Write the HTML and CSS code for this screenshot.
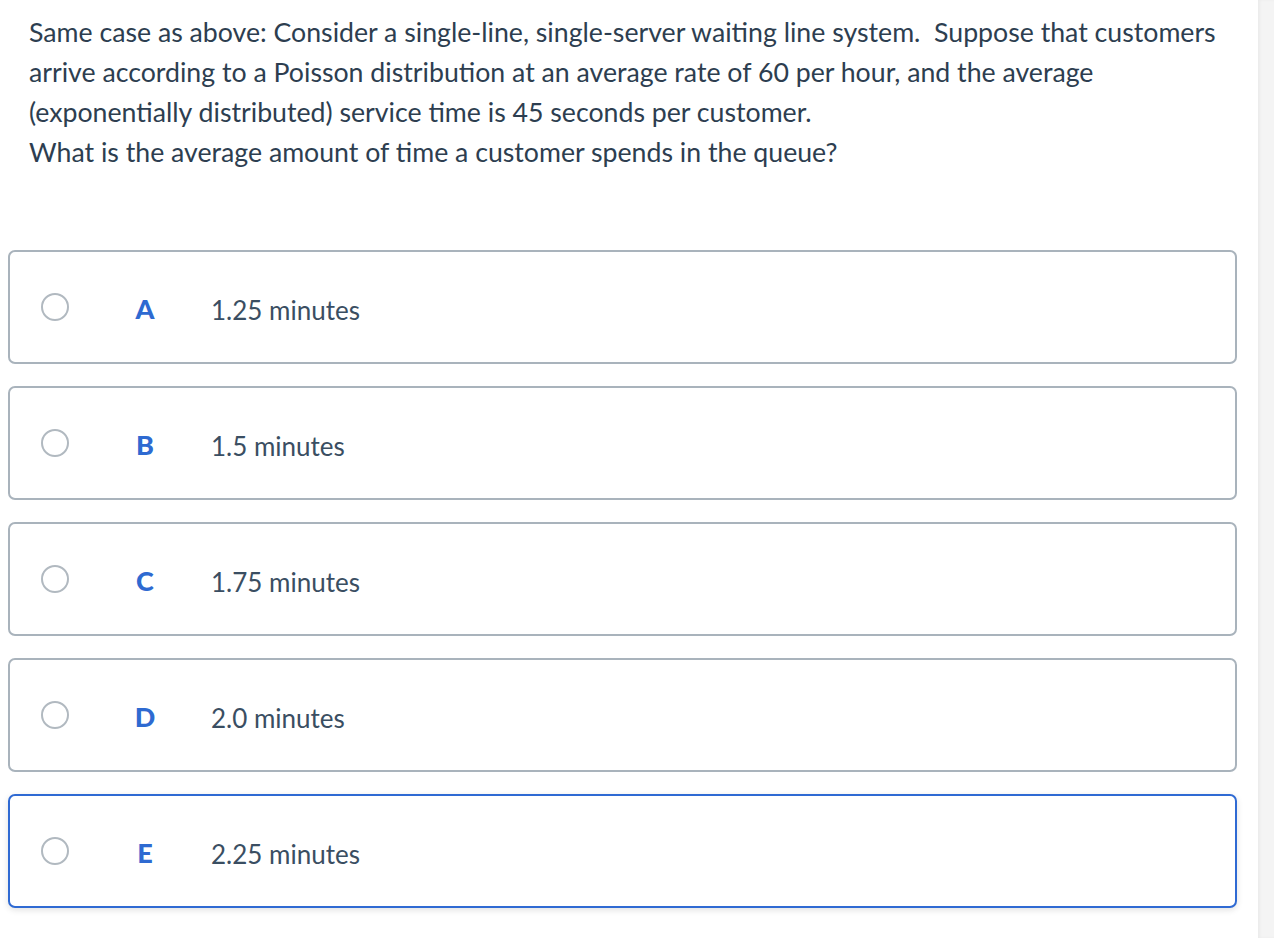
FILE: index.html
```html
<!DOCTYPE html>
<html lang="en">
<head>
<meta charset="utf-8">
<title>Question</title>
<link rel="stylesheet" href="styles.css">
</head>
<body>
<div class="page">
  <main class="content">
    <div class="question">
      <p>Same case as above: Consider a single-line, single-server waiting line system.&nbsp; Suppose that customers arrive according to a Poisson distribution at an average rate of 60 per hour, and the average (exponentially distributed) service time is 45 seconds per customer.</p>
      <p>What is the average amount of time a customer spends in the queue?</p>
    </div>
    <div class="options">
      <label class="option"><span class="radio"></span><span class="letter">A</span><span class="text">1.25 minutes</span></label>
      <label class="option"><span class="radio"></span><span class="letter">B</span><span class="text">1.5 minutes</span></label>
      <label class="option"><span class="radio"></span><span class="letter">C</span><span class="text">1.75 minutes</span></label>
      <label class="option"><span class="radio"></span><span class="letter">D</span><span class="text">2.0 minutes</span></label>
      <label class="option option-focus"><span class="radio"></span><span class="letter">E</span><span class="text">2.25 minutes</span></label>
    </div>
  </main>
  <div class="scrollbar"></div>
</div>
</body>
</html>
```

FILE: styles.css
```css
html, body {
  margin: 0;
  padding: 0;
  background: #ffffff;
}
body {
  font-family: "Lato", "Open Sans", sans-serif;
  color: #2d3e50;
}
.page {
  display: flex;
  width: 1274px;
  height: 938px;
  overflow: hidden;
}
.content {
  flex: 1;
  padding: 12px 21px 0 8px;
}
.question {
  padding-left: 21px;
  font-size: 26.7px;
  line-height: 40px;
}
.question p {
  margin: 0;
}
.options {
  margin-top: 78px;
  display: flex;
  flex-direction: column;
  gap: 22px;
}
.option {
  display: flex;
  align-items: center;
  height: 114px;
  box-sizing: border-box;
  border: 2px solid #a9b3bc;
  border-radius: 7px;
  padding-left: 31px;
  background: #fff;
}
.option-focus {
  border-color: #2f6ad3;
  box-shadow: 0 2px 6px rgba(0, 0, 0, 0.12);
}
.radio {
  width: 28px;
  height: 28px;
  box-sizing: border-box;
  border: 2px solid #b1b9c0;
  border-radius: 50%;
  flex: none;
}
.letter {
  width: 40px;
  margin-left: 56px;
  padding-top: 4px;
  text-align: center;
  font-weight: 900;
  font-size: 27px;
  line-height: 30px;
  color: #2e6ad1;
}
.text {
  margin-left: 46px;
  padding-top: 5px;
  font-size: 26px;
  line-height: 30px;
  color: #3a4e62;
}
.scrollbar {
  width: 16px;
  flex: none;
  background: #f4f4f4;
  box-shadow: inset 2px 0 3px rgba(0, 0, 0, 0.04);
}
```
